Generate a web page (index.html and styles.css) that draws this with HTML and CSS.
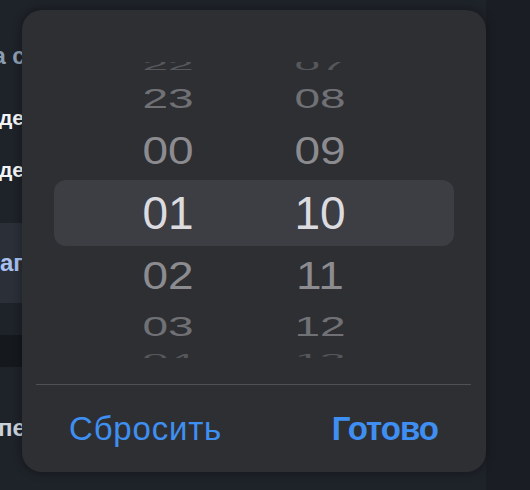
FILE: index.html
```html
<!DOCTYPE html>
<html lang="ru">
<head>
<meta charset="utf-8">
<title>Выбор времени</title>
<link rel="stylesheet" href="styles.css">
</head>
<body>
<div class="page">
  <main class="main">
    <div class="heading">а с</div>
    <div class="row-item">де</div>
    <div class="row-item">де</div>
    <div class="band"><span class="band-text">аг</span></div>
    <div class="gap-row"></div>
    <div class="dark-band"></div>
    <div class="section">пе</div>
  </main>
  <aside class="side"></aside>

  <div class="picker">
    <div class="wheel">
      <div class="wheel-list">
        <div class="w-row r-far"><span class="cell"><span class="num">22</span></span><span class="cell"><span class="num">07</span></span></div>
        <div class="w-row r-mid"><span class="cell"><span class="num">23</span></span><span class="cell"><span class="num">08</span></span></div>
        <div class="w-row r-near r-near-top"><span class="cell"><span class="num">00</span></span><span class="cell"><span class="num">09</span></span></div>
        <div class="w-row r-sel"><span class="cell"><span class="num">01</span></span><span class="cell"><span class="num">10</span></span></div>
        <div class="w-row r-near r-near-bot"><span class="cell"><span class="num">02</span></span><span class="cell"><span class="num">11</span></span></div>
        <div class="w-row r-mid"><span class="cell"><span class="num">03</span></span><span class="cell"><span class="num">12</span></span></div>
        <div class="w-row r-far"><span class="cell"><span class="num">04</span></span><span class="cell"><span class="num">13</span></span></div>
      </div>
    </div>
    <div class="divider"></div>
    <div class="actions">
      <span class="btn btn-reset">Сбросить</span>
      <span class="btn btn-done">Готово</span>
    </div>
  </div>
</div>
</body>
</html>
```

FILE: styles.css
```css
* { box-sizing: border-box; }
html, body {
  margin: 0;
  padding: 0;
  background: #1e2229;
  font-family: "Liberation Sans", Arial, sans-serif;
}
.page {
  position: relative;
  width: 530px;
  height: 490px;
  display: flex;
  overflow: hidden;
}
.main {
  width: 486px;
  display: flex;
  flex-direction: column;
  background: #1e2229;
}
.side {
  flex: 1;
  background: #1a1d23;
}
.heading {
  margin-top: 40px;
  margin-bottom: 20px;
  height: 32px;
  margin-left: -7px;
  font-size: 23px;
  font-weight: bold;
  color: #8d9db0;
  line-height: 32px;
}
.row-item {
  margin-left: -1px;
  height: 52px;
  line-height: 52px;
  font-size: 21px;
  font-weight: bold;
  color: #f2f4f6;
}
.band {
  margin-top: 27px;
  height: 80px;
  background: #2a2f38;
  display: flex;
  align-items: center;
}
.band-text {
  font-size: 24px;
  font-weight: bold;
  color: #a9c1ef;
}
.gap-row { height: 32px; }
.dark-band {
  height: 32px;
  background: #15181d;
}
.section {
  margin-top: 46px;
  margin-left: -2px;
  font-size: 24px;
  font-weight: bold;
  color: #c9d2da;
  line-height: 30px;
}

/* picker modal */
.picker {
  position: absolute;
  left: 22px;
  top: 10px;
  width: 464px;
  height: 462px;
  border-radius: 20px;
  background: #2e2f33;
  box-shadow: 0 0 10px rgba(0, 0, 0, 0.35);
  display: flex;
  flex-direction: column;
}
.wheel {
  margin-top: 52px;
  height: 296px;
  overflow: hidden;
}
.wheel-list {
  margin-top: -8px;
  display: flex;
  flex-direction: column;
}
.w-row {
  display: flex;
  gap: 52px;
  padding-left: 96px;
  font-size: 46px;
}
.cell {
  width: 100px;
  text-align: center;
}
.num {
  display: inline-block;
  transform-origin: 50% 50%;
}
.r-far { height: 22px; line-height: 22px; }
.r-far .num { transform: scaleY(0.3); color: #56575b; }
.r-mid { height: 44px; line-height: 44px; }
.r-mid .num { transform: scaleY(0.62); color: #707175; }
.r-near { line-height: 60px; }
.r-near-top { height: 60px; }
.r-near-bot { height: 58px; line-height: 58px; }
.r-near .num { transform: scaleY(0.86); color: #8c8c90; }
.r-sel {
  height: 66px;
  line-height: 66px;
  margin: 0 32px;
  padding-left: 64px;
  border-radius: 12px;
  background: #3d3e43;
}
.r-sel .num { color: #dcdce0; }

.divider {
  margin: 26px 15px 0 14px;
  height: 1px;
  background: #505156;
}
.actions {
  flex: 1;
  display: flex;
  align-items: center;
  justify-content: space-between;
  padding: 0 48px 0 47px;
}
.btn {
  font-size: 33px;
  color: #3f8ff2;
}
.btn-reset { letter-spacing: 0.8px; }
.btn-done { font-weight: bold; letter-spacing: -1px; }
```
